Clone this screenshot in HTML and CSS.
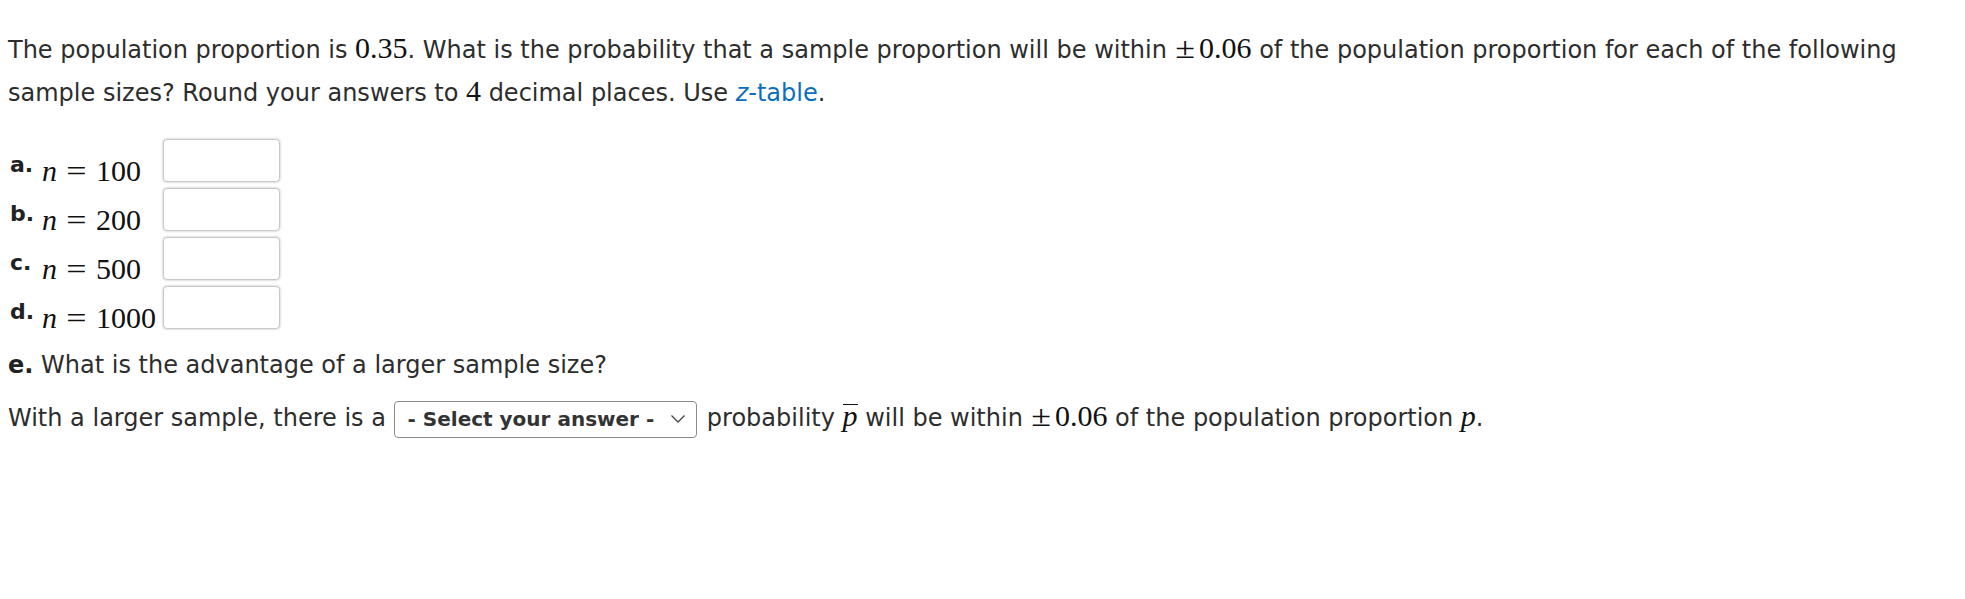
FILE: index.html
```html
<!DOCTYPE html>
<html>
<head>
<meta charset="utf-8">
<link rel="stylesheet" href="styles.css">
</head>
<body>
<div class="page">
  <p class="intro">The population proportion is <span class="m">0.35</span>. What is the probability that a sample proportion will be within <span class="m"><span class="pm">±</span>0.06</span> of the population proportion for each of the following sample sizes? Round your answers to <span class="m">4</span> decimal places. Use <a class="link" href="#"><i>z</i>-table</a>.</p>
  <div class="parts">
    <div class="row"><span class="lbl">a.</span><span class="m eq"><i>n</i><span class="eqs">=</span>100</span><span class="box"></span></div>
    <div class="row"><span class="lbl">b.</span><span class="m eq"><i>n</i><span class="eqs">=</span>200</span><span class="box"></span></div>
    <div class="row"><span class="lbl">c.</span><span class="m eq"><i>n</i><span class="eqs">=</span>500</span><span class="box"></span></div>
    <div class="row"><span class="lbl">d.</span><span class="m eq"><i>n</i><span class="eqs">=</span>1000</span><span class="box"></span></div>
  </div>
  <p class="q"><b>e.</b> What is the advantage of a larger sample size?</p>
  <p class="ans">With a larger sample, there is a <span class="sel"><span class="sel-text">- Select your answer -</span><svg class="chev" width="16" height="10" viewBox="0 0 16 10"><path d="M1.5 1.5 L8 8 L14.5 1.5" fill="none" stroke="#444" stroke-width="1.3"/></svg></span> probability <span class="m"><i class="bar">p</i></span> will be within <span class="m"><span class="pm">±</span>0.06</span> of the population proportion <span class="m"><i>p</i></span>.</p>
</div>
</body>
</html>
```
FILE: styles.css
```css
html, body {
  margin: 0;
  padding: 0;
  background: #fff;
}
.page {
  padding: 29px 8px 0 8px;
  font-family: "DejaVu Sans", Verdana, sans-serif;
  font-size: 24px;
  color: #2d2d2d;
}
.intro {
  margin: 0;
  line-height: 43px;
}
.m {
  font-family: "Liberation Serif", "DejaVu Serif", serif;
  font-size: 30px;
  line-height: 1;
  color: #111;
}
.m i {
  font-style: italic;
}
.pm {
  display: inline-block;
  margin: 0 6px 0 2px;
  transform: scaleX(1.2);
}
.link {
  color: #0a6ebd;
  text-decoration: none;
}
.parts {
  margin-top: 24px;
  display: flex;
  flex-direction: column;
  gap: 6px;
}
.row {
  display: flex;
  align-items: flex-start;
  height: 43px;
}
.lbl {
  font-weight: bold;
  font-size: 22px;
  width: 29px;
  padding-left: 2px;
  margin-top: 15px;
  line-height: 22px;
  color: #222;
}
.eq {
  width: 121px;
  padding-left: 3px;
  margin-top: 17px;
  line-height: 29px;
  white-space: nowrap;
}
.eqs {
  margin: 0 11px;
  display: inline-block;
  transform: scaleX(1.2);
}
.box {
  width: 115px;
  height: 41px;
  border: 1px solid #c8c8c8;
  border-radius: 4px;
  box-shadow: 0 0 2px 1px rgba(0,0,0,0.12);
  background: #fff;
}
.q {
  margin: 15px 0 0 0;
  line-height: 43px;
}
.q b {
  color: #222;
}
.ans {
  margin: 10px 0 0 0;
  line-height: 43px;
}
.sel {
  display: inline-flex;
  align-items: center;
  vertical-align: middle;
  height: 37px;
  box-sizing: border-box;
  border: 1px solid #8a8a8a;
  border-radius: 4px;
  padding: 0 10px 0 13px;
  margin-right: 2px;
  line-height: 1;
}
.sel-text {
  font-weight: bold;
  font-size: 20px;
  color: #333;
}
.chev {
  margin-left: 16px;
}
.bar {
  display: inline-block;
  border-top: 1.5px solid #111;
  line-height: 0.62;
  padding-top: 2px;
}
```
